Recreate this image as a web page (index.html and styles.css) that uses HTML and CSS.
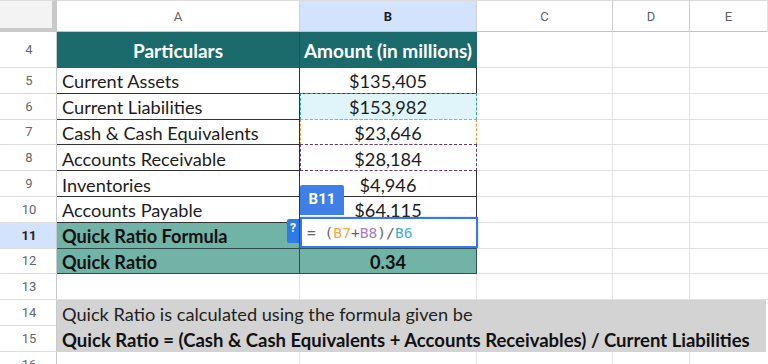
FILE: index.html
```html
<!DOCTYPE html>
<html>
<head>
<meta charset="utf-8">
<link rel="stylesheet" href="styles.css">
</head>
<body>
<div class="sheet">
  <div class="corner"></div>
  <div class="colh">A</div>
  <div class="colh sel">B</div>
  <div class="colh">C</div>
  <div class="colh">D</div>
  <div class="colh last">E</div>

  <div class="rowh">4</div>
  <div class="c th ta">Particulars</div>
  <div class="c th tb">Amount (in millions)</div>
  <div class="c"></div><div class="c"></div><div class="c last"></div>

  <div class="rowh">5</div>
  <div class="c ta">Current Assets</div>
  <div class="c tb num">$135,405</div>
  <div class="c"></div><div class="c"></div><div class="c last"></div>

  <div class="rowh">6</div>
  <div class="c ta">Current Liabilities</div>
  <div class="c tb num ref ref6">$153,982</div>
  <div class="c"></div><div class="c"></div><div class="c last"></div>

  <div class="rowh">7</div>
  <div class="c ta">Cash &amp; Cash Equivalents</div>
  <div class="c tb num ref ref7">$23,646</div>
  <div class="c"></div><div class="c"></div><div class="c last"></div>

  <div class="rowh">8</div>
  <div class="c ta">Accounts Receivable</div>
  <div class="c tb num ref ref8">$28,184</div>
  <div class="c"></div><div class="c"></div><div class="c last"></div>

  <div class="rowh">9</div>
  <div class="c ta">Inventories</div>
  <div class="c tb num">$4,946</div>
  <div class="c"></div><div class="c"></div><div class="c last"></div>

  <div class="rowh">10</div>
  <div class="c ta">Accounts Payable</div>
  <div class="c tb num">$64,115</div>
  <div class="c"></div><div class="c"></div><div class="c last"></div>

  <div class="rowh sel">11</div>
  <div class="c ta qr">Quick Ratio Formula</div>
  <div class="c tb qr num"></div>
  <div class="c"></div><div class="c"></div><div class="c last"></div>

  <div class="rowh">12</div>
  <div class="c ta qr">Quick Ratio</div>
  <div class="c tb qr num">0.34</div>
  <div class="c"></div><div class="c"></div><div class="c last"></div>

  <div class="rowh">13</div>
  <div class="c"></div><div class="c"></div><div class="c"></div><div class="c"></div><div class="c last"></div>

  <div class="rowh">14</div>
  <div class="note">Quick Ratio is calculated using the formula given be</div>

  <div class="rowh">15</div>
  <div class="note strong">Quick Ratio = (Cash &amp; Cash Equivalents + Accounts Receivables) / Current Liabilities</div>

  <div class="rowh">16</div>
  <div class="c"></div><div class="c"></div><div class="c"></div><div class="c"></div><div class="c last"></div>

  <div class="chip">B11</div>
  <div class="help">?</div>
  <div class="editor"><span class="code"><span class="op">= (</span><span class="r7">B7</span><span class="op">+</span><span class="r8">B8</span><span class="op">)/</span><span class="r6">B6</span></span></div>
</div>
</body>
</html>
```

FILE: styles.css
```css
* { box-sizing: border-box; }
html, body { margin: 0; padding: 0; background: #fff; }
body { width: 768px; height: 364px; overflow: hidden; }

.sheet {
  position: relative;
  display: grid;
  grid-template-columns: 57px 243px 177px 136px 77px 78px;
  grid-template-rows: 32px 36px repeat(12, 25.8px);
  font-family: Lato, "Open Sans", sans-serif;
  font-size: 18.2px;
  color: #1c1c1c;
}

.corner {
  background: #f3f3f3;
  border-top: 1px solid #dcdcdc;
  border-right: 5px solid #c9c9c9;
  border-bottom: 4px solid #c9c9c9;
}

.colh {
  display: flex;
  align-items: center;
  justify-content: center;
  font-family: Roboto, "Liberation Sans", sans-serif;
  font-size: 13px;
  color: #5f5f5f;
  border-top: 1px solid #dcdcdc;
  border-right: 1px solid #d0d0d0;
  border-bottom: 1px solid #c4c4c4;
  padding-top: 1px;
}
.colh.sel { background: #d3e3fd; color: #1f1f1f; font-weight: 700; }
.colh.last { border-right: 1px solid #e2e2e2; }

.rowh {
  display: flex;
  align-items: center;
  justify-content: center;
  font-family: Roboto, "Liberation Sans", sans-serif;
  font-size: 13px;
  color: #666;
  border-right: 1px solid #c9c9c9;
  border-bottom: 1px solid #dedede;
  padding-left: 2px;
}
.rowh.sel { background: #d3e3fd; color: #1f1f1f; font-weight: 700; }

.c {
  position: relative;
  display: flex;
  align-items: center;
  border-right: 1px solid #e2e2e2;
  border-bottom: 1px solid #e2e2e2;
  white-space: nowrap;
  overflow: hidden;
  padding: 2px 0 0 5px;
}
.c.last { border-right: none; }

.ta { border-right: 1px solid #333; border-bottom: 1px solid #333; }
.tb { border-right: 1px solid #333; border-bottom: 1px solid #333; }
.num { justify-content: center; padding-left: 0; }

.th {
  background: #1b6b6d;
  color: #fff;
  font-weight: 700;
  font-size: 19px;
  justify-content: center;
  padding-left: 0;
  border-bottom: 1px solid #1b6b6d;
  border-right: 1px solid #1b6b6d;
}
.th.ta { border-right: 1px solid #14595a; }
.th.tb { border-right: 1px solid #1b6b6d; }

.qr {
  background: #72b3a8;
  font-weight: 700;
  color: #111;
  border-bottom: 1px solid #2f4f4a;
  border-right: 1px solid #2f4f4a;
}

.ref {
  overflow: visible;
  border-right-color: transparent;
  border-bottom-color: transparent;
}
.ref::after {
  content: "";
  position: absolute;
  left: 0; top: -1px; right: -1px; bottom: -1px;
  border: 1px dashed;
  pointer-events: none;
}
.ref6 { background: #e0f5f9; }
.ref6::after { border-color: #1fa3b8; }
.ref7::after { border-color: #f09a2a; }
.ref8::after { border-color: #5e3a72; }

.note {
  grid-column: 2 / 7;
  display: flex;
  align-items: center;
  background: #d3d3d3;
  padding: 2px 0 0 5px;
  margin-right: 2px;
  white-space: nowrap;
  color: #1f1f1f;
}
.note.strong { font-weight: 700; color: #111; font-size: 18.5px; }

.chip {
  position: absolute;
  left: 300px;
  top: 185px;
  width: 44px;
  height: 30px;
  background: #3f7fe6;
  color: #fff;
  font-family: Roboto, "Liberation Sans", sans-serif;
  font-weight: 700;
  font-size: 15px;
  display: flex;
  align-items: center;
  justify-content: center;
  border-radius: 2px 2px 0 0;
  padding-bottom: 3px;
}

.help {
  position: absolute;
  left: 287px;
  top: 219px;
  width: 12px;
  height: 24px;
  background: #2f7ae5;
  color: #fff;
  font-family: Roboto, "Liberation Sans", sans-serif;
  font-weight: 700;
  font-size: 12px;
  display: flex;
  justify-content: center;
  padding-top: 2px;
  border-radius: 2px 0 0 2px;
}

.editor {
  position: absolute;
  left: 300px;
  top: 217px;
  width: 178px;
  height: 31px;
  background: #fff;
  border: 2px solid #3b78e7;
  font-family: "DejaVu Sans Mono", "Liberation Mono", monospace;
  font-size: 14.6px;
  display: flex;
  align-items: center;
  padding-left: 5px;
  box-shadow: 0 0 2px rgba(60,120,230,0.4);
}
.code { white-space: pre; }
.op { color: #666; }
.r7 { color: #f2a947; }
.r8 { color: #a77dbd; }
.r6 { color: #46b1c6; }
```
